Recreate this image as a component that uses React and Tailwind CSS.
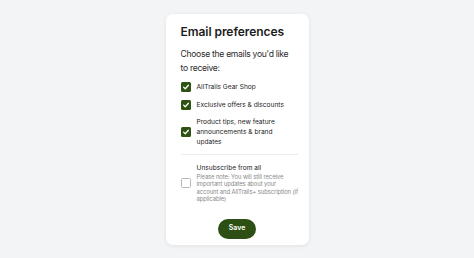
import React from "react";

function Check({ checked }) {
  if (!checked) {
    return (
      <span className="flex h-[10px] w-[10px] shrink-0 rounded-[1.5px] border border-[#b8b8b8] bg-white" />
    );
  }
  return (
    <span className="flex h-[10px] w-[10px] shrink-0 items-center justify-center rounded-[1.5px] bg-[#2e5214]">
      <svg viewBox="0 0 10 10" className="h-[8px] w-[8px]">
        <path d="M2 5.2 L4.1 7.2 L8 2.8" fill="none" stroke="white" strokeWidth="1.6" strokeLinecap="round" strokeLinejoin="round" />
      </svg>
    </span>
  );
}

export default function App() {
  return (
    <div
      className="flex h-screen w-full items-center justify-center bg-[#f3f4f6]"
      style={{ fontFamily: "Inter, 'Noto Sans', sans-serif" }}
    >
      <div className="flex w-[143px] flex-col rounded-[7px] bg-white pb-[6px] pl-[15px] pr-[10px] pt-[10px] shadow-[0_1px_4px_rgba(0,0,0,0.08)]">
        <h1 className="text-[12px] font-semibold leading-[16px] tracking-[-0.05px] text-[#1c1c1c]">Email preferences</h1>
        <p className="mt-[7px] text-[8.6px] leading-[14px] tracking-[-0.3px] text-[#2b2b2b]">
          Choose the emails you'd like
          <br />
          to receive:
        </p>
        <div className="mt-[7px] flex flex-col">
          <label className="flex items-center gap-[6px]">
            <Check checked />
            <span className="text-[6.6px] leading-[10px] text-[#222]">AllTrails Gear Shop</span>
          </label>
          <label className="mt-[8px] flex items-center gap-[6px]">
            <Check checked />
            <span className="text-[6.6px] leading-[10px] text-[#222]">Exclusive offers &amp; discounts</span>
          </label>
          <label className="mt-[7px] flex items-center gap-[6px]">
            <Check checked />
            <span className="text-[6.6px] leading-[10px] text-[#222]">
              Product tips, new feature
              <br />
              announcements &amp; brand
              <br />
              updates
            </span>
          </label>
        </div>
        <div className="mr-[1px] mt-[7px] h-px bg-[#ececec]" />
        <label className="mt-[8px] flex items-center gap-[6px]">
          <Check checked={false} />
          <span className="flex flex-col">
            <span className="text-[6.6px] leading-[10px] text-[#222]">Unsubscribe from all</span>
            <span className="text-[5.9px] leading-[7.5px] tracking-[-0.1px] text-[#8a8a8a]">
              Please note: You will still receive important updates about your account and AllTrails+ subscription (if applicable)
            </span>
          </span>
        </label>
        <div className="mt-[16px] flex justify-center pr-[5px]">
          <button className="h-[20px] w-[38px] rounded-full bg-[#2e4f14] text-[7px] font-semibold text-white">
            Save
          </button>
        </div>
      </div>
    </div>
  );
}
